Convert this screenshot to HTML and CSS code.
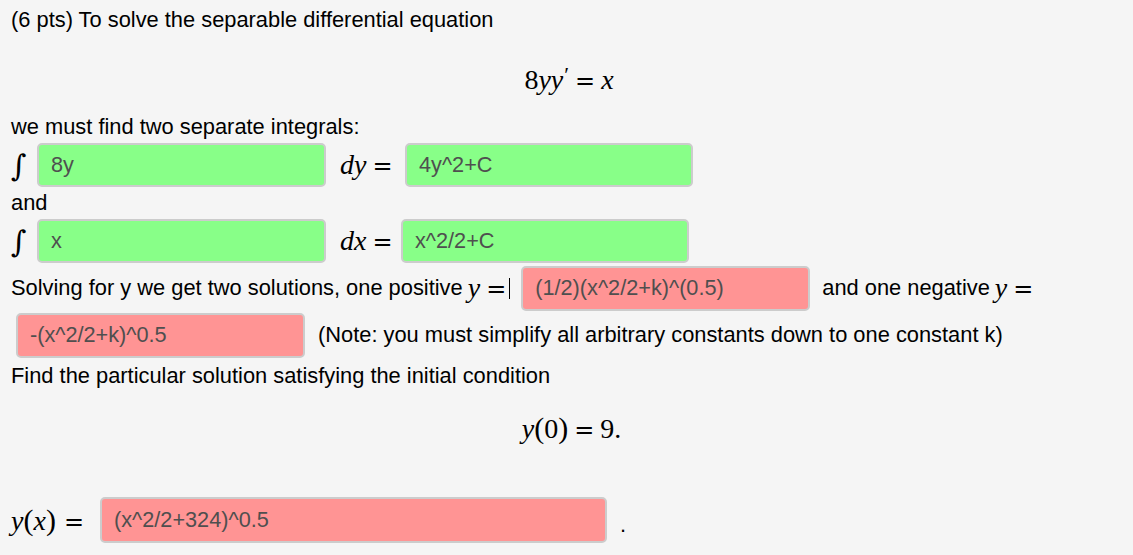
FILE: index.html
```html
<!DOCTYPE html>
<html lang="en">
<head>
    <meta charset="UTF-8">
    <link rel="stylesheet" href="styles.css">
    <title>Separable differential equation</title>
</head>
<body>
    <div class="problem">
        <div class="line first">(6 pts) To solve the separable differential equation</div>
        <div class="display eq1">
            <span class="math"><span class="mn">8</span><span class="mi">yy</span><span class="prime">′</span><span class="mo">=</span><span class="mi">x</span></span>
        </div>
        <div class="line gap-big">we must find two separate integrals:</div>

        <div class="row">
            <span class="math integral">∫</span>
            <input class="answer correct w1" type="text" value="8y" readonly>
            <span class="math lbl"><span class="mi">dy</span><span class="mo">=</span></span>
            <input class="answer correct w2" type="text" value="4y^2+C" readonly>
        </div>
        <div class="line">and</div>
        <div class="row">
            <span class="math integral">∫</span>
            <input class="answer correct w1" type="text" value="x" readonly>
            <span class="math lbl narrow"><span class="mi">dx</span><span class="mo">=</span></span>
            <input class="answer correct w2" type="text" value="x^2/2+C" readonly>
        </div>

        <div class="row">
            <span class="text">Solving for y we get two solutions, one positive</span>
            <span class="math inline"><span class="mi">y</span><span class="mo">=</span></span><span class="caret"></span>
            <input class="answer wrong w1 pos" type="text" value="(1/2)(x^2/2+k)^(0.5)" readonly>
            <span class="text">and one negative</span>
            <span class="math inline"><span class="mi">y</span><span class="mo">=</span></span>
        </div>
        <div class="row">
            <input class="answer wrong w1 neg" type="text" value="-(x^2/2+k)^0.5" readonly>
            <span class="text">(Note: you must simplify all arbitrary constants down to one constant k)</span>
        </div>
        <div class="line find">Find the particular solution satisfying the initial condition</div>
        <div class="display eq2">
            <span class="math"><span class="mi">y</span><span class="paren">(</span>0<span class="paren">)</span><span class="mo">=</span>9.</span>
        </div>

        <div class="row last">
            <span class="math final"><span class="mi">y</span><span class="paren">(</span><span class="mi">x</span><span class="paren">)</span><span class="mo">=</span></span>
            <input class="answer wrong w3" type="text" value="(x^2/2+324)^0.5" readonly>
            <span class="text dot">.</span>
        </div>
    </div>
</body>
</html>
```

FILE: styles.css
```css
body {
    margin: 0;
    background-color: #f5f5f5;
    color: #000;
    font-family: "Liberation Sans", Arial, sans-serif;
    font-size: 21.85px;
}

.problem {
    padding: 7px 11px 0 11px;
}

.line {
    line-height: 26px;
    height: 26px;
    margin-top: 3px;
}

.line.first {
    margin-top: 0;
}

.line.find {
    margin-top: 6px;
}

.gap-big {
    margin-top: 26px;
}

.display {
    text-align: center;
    line-height: 26px;
    height: 26px;
}

.eq1 {
    margin-top: 29px;
    padding-left: 5px;
}

.eq2 {
    margin-top: 26px;
    padding-left: 10px;
}

.math {
    font-family: "Liberation Serif", "DejaVu Serif", serif;
    font-size: 28px;
    white-space: nowrap;
}

.mi {
    font-style: italic;
}

.mo {
    font-family: "DejaVu Serif", serif;
    font-size: 24px;
    margin: 0 6px;
}

.paren {
    font-size: 30px;
}

.prime {
    font-size: 22px;
    vertical-align: 7px;
    margin-left: 1px;
}

.row {
    display: flex;
    align-items: center;
    margin-top: 3px;
    height: 44px;
}

.row.last {
    margin-top: 56px;
    height: 46px;
}

.integral {
    font-family: "DejaVu Serif", serif;
    font-size: 30px;
    font-style: italic;
    width: 26px;
    padding-left: 0;
}

.lbl {
    width: 79px;
    padding-left: 14px;
    box-sizing: border-box;
}

.lbl.narrow {
    width: 75px;
}

.lbl .mo {
    margin-right: 0;
}

.inline .mo {
    margin-right: 0;
}

.text {
    white-space: nowrap;
}

.inline {
    margin-left: 5px;
}

.caret {
    display: inline-block;
    width: 1px;
    height: 21px;
    background-color: #000;
    margin-left: 3px;
    margin-right: 11px;
}

.answer {
    box-sizing: border-box;
    height: 44px;
    border: 2px solid #cccccc;
    border-radius: 5px;
    padding: 0 12px;
    font-family: "Liberation Sans", Arial, sans-serif;
    font-size: 21.7px;
    color: #4f4f4f;
    outline: none;
    margin: 0;
}

.correct {
    background-color: #88ff88;
}

.wrong {
    background-color: #ff9494;
}

.w1 {
    width: 289px;
}

.w2 {
    width: 288px;
}

.w3 {
    width: 507px;
    height: 46px;
}

.pos {
    margin-right: 12px;
    height: 45px;
}

.neg {
    margin-left: 5px;
    margin-right: 13px;
    height: 45px;
}

.final {
    width: 89px;
}

.final .mo {
    margin-left: 8px;
}

.dot {
    margin-left: 13px;
    padding-top: 10px;
}
```
